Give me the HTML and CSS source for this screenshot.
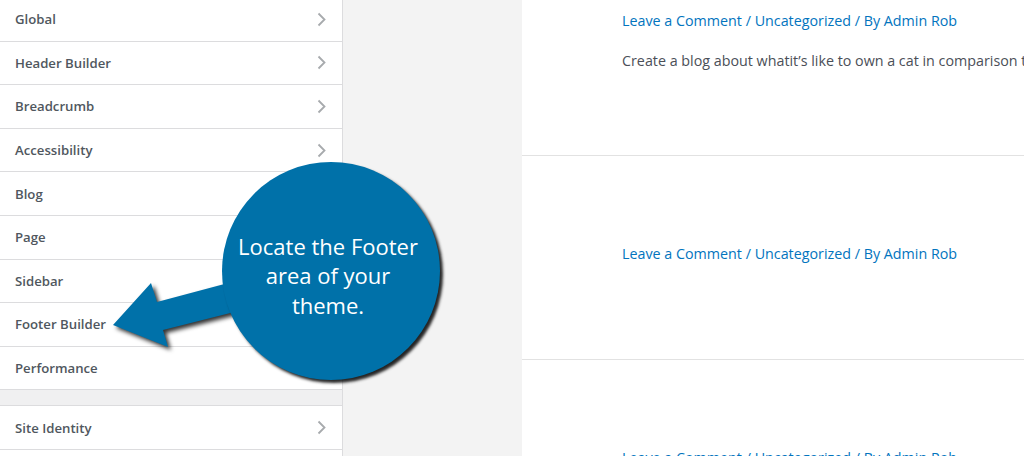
FILE: index.html
```html
<!DOCTYPE html>
<html lang="en">
<head>
<meta charset="utf-8">
<title>Customizer</title>
<link rel="stylesheet" href="styles.css">
</head>
<body>
<div class="app">
  <aside class="sidebar">
    <ul class="menu menu--main">
      <li class="menu-item"><span>Global</span><svg class="chev" viewBox="0 0 9 15"><polyline points="1.5,1.5 7.5,7.5 1.5,13.5"/></svg></li>
      <li class="menu-item"><span>Header Builder</span><svg class="chev" viewBox="0 0 9 15"><polyline points="1.5,1.5 7.5,7.5 1.5,13.5"/></svg></li>
      <li class="menu-item"><span>Breadcrumb</span><svg class="chev" viewBox="0 0 9 15"><polyline points="1.5,1.5 7.5,7.5 1.5,13.5"/></svg></li>
      <li class="menu-item"><span>Accessibility</span><svg class="chev" viewBox="0 0 9 15"><polyline points="1.5,1.5 7.5,7.5 1.5,13.5"/></svg></li>
      <li class="menu-item"><span>Blog</span><svg class="chev" viewBox="0 0 9 15"><polyline points="1.5,1.5 7.5,7.5 1.5,13.5"/></svg></li>
      <li class="menu-item"><span>Page</span><svg class="chev" viewBox="0 0 9 15"><polyline points="1.5,1.5 7.5,7.5 1.5,13.5"/></svg></li>
      <li class="menu-item"><span>Sidebar</span><svg class="chev" viewBox="0 0 9 15"><polyline points="1.5,1.5 7.5,7.5 1.5,13.5"/></svg></li>
      <li class="menu-item"><span>Footer Builder</span><svg class="chev" viewBox="0 0 9 15"><polyline points="1.5,1.5 7.5,7.5 1.5,13.5"/></svg></li>
      <li class="menu-item"><span>Performance</span><svg class="chev" viewBox="0 0 9 15"><polyline points="1.5,1.5 7.5,7.5 1.5,13.5"/></svg></li>
    </ul>
    <div class="menu-gap"></div>
    <ul class="menu">
      <li class="menu-item"><span>Site Identity</span><svg class="chev" viewBox="0 0 9 15"><polyline points="1.5,1.5 7.5,7.5 1.5,13.5"/></svg></li>
    </ul>
  </aside>
  <div class="preview">
    <main class="content">
      <article class="post post--first">
        <div class="meta"><a>Leave a Comment</a> / <a>Uncategorized</a> / By <a>Admin Rob</a></div>
        <p class="excerpt">Create a blog about whatit’s like to own a cat in comparison to owning a dog.</p>
      </article>
      <article class="post post--mid">
        <div class="meta"><a>Leave a Comment</a> / <a>Uncategorized</a> / By <a>Admin Rob</a></div>
      </article>
      <article class="post post--last">
        <div class="meta"><a>Leave a Comment</a> / <a>Uncategorized</a> / By <a>Admin Rob</a></div>
      </article>
    </main>
  </div>
</div>

<svg class="arrow" viewBox="100 265 180 100" width="180" height="100">
  <polygon points="113,325 151,283 157,302 262,274 266,304 163,330 168,347"/>
</svg>
<div class="callout">
  <p class="callout-text">Locate the Footer<br>area of your<br>theme.</p>
</div>
</body>
</html>
```

FILE: styles.css
```css
* { box-sizing: border-box; }

html, body {
  margin: 0;
  padding: 0;
  width: 1024px;
  height: 456px;
  overflow: hidden;
  background: #fff;
}

.app {
  display: flex;
  height: 456px;
}

/* ---------- Sidebar ---------- */
.sidebar {
  width: 343px;
  flex: 0 0 343px;
  background: #fff;
  border-right: 1px solid #dcdcde;
  overflow: hidden;
}

.menu {
  list-style: none;
  margin: 0;
  padding: 0;
}

.menu--main {
  margin-top: -2px;
}

.menu-item {
  height: 43.6px;
  display: flex;
  align-items: center;
  justify-content: space-between;
  padding: 0 16px 0 15px;
  border-bottom: 1px solid #dcdcde;
  font-family: "Open Sans", "Noto Sans", sans-serif;
  font-size: 13.2px;
  font-weight: 600;
  color: #50575e;
}

.chev {
  width: 9px;
  height: 15px;
  fill: none;
  stroke: #a7aaad;
  stroke-width: 1.8;
}

.menu-gap {
  height: 16px;
  background: #f0f0f1;
  border-bottom: 1px solid #dcdcde;
}

/* ---------- Preview ---------- */
.preview {
  flex: 1;
  display: flex;
  background: #f3f3f3;
}

.content {
  flex: 1;
  margin-left: 179px;
  background: #fff;
}

.post {
  padding-left: 100px;
  border-bottom: 1px solid #e2e2e2;
  font-family: "Open Sans", "Noto Sans", sans-serif;
  font-size: 14.3px;
  line-height: 24px;
  white-space: nowrap;
  overflow: hidden;
}

.post--first { padding-top: 9px; padding-bottom: 82px; }
.post--mid { padding-top: 86px; padding-bottom: 93px; }
.post--last { padding-top: 86px; border-bottom: 0; }

.meta {
  color: #0274be;
}

.meta a { color: #0274be; }

.excerpt {
  margin: 16px 0 0;
  color: #4b4f58;
}

/* ---------- Callout overlay ---------- */
.arrow {
  position: absolute;
  left: 100px;
  top: 265px;
  overflow: visible;
  fill: #0071a9;
  filter: drop-shadow(3px 3px 2px rgba(0, 0, 0, 0.8));
}

.callout {
  position: absolute;
  left: 222px;
  top: 162px;
  width: 218px;
  height: 218px;
  border-radius: 50%;
  background: #0071a9;
  box-shadow: 3px 3px 3px rgba(0, 0, 0, 0.85);
  display: flex;
  align-items: center;
  justify-content: center;
  padding: 10px 6px 0 0;
}

.callout-text {
  margin: 0;
  font-family: "Open Sans", "Noto Sans", sans-serif;
  font-size: 22px;
  line-height: 29.5px;
  color: #fff;
  text-align: center;
}
```
